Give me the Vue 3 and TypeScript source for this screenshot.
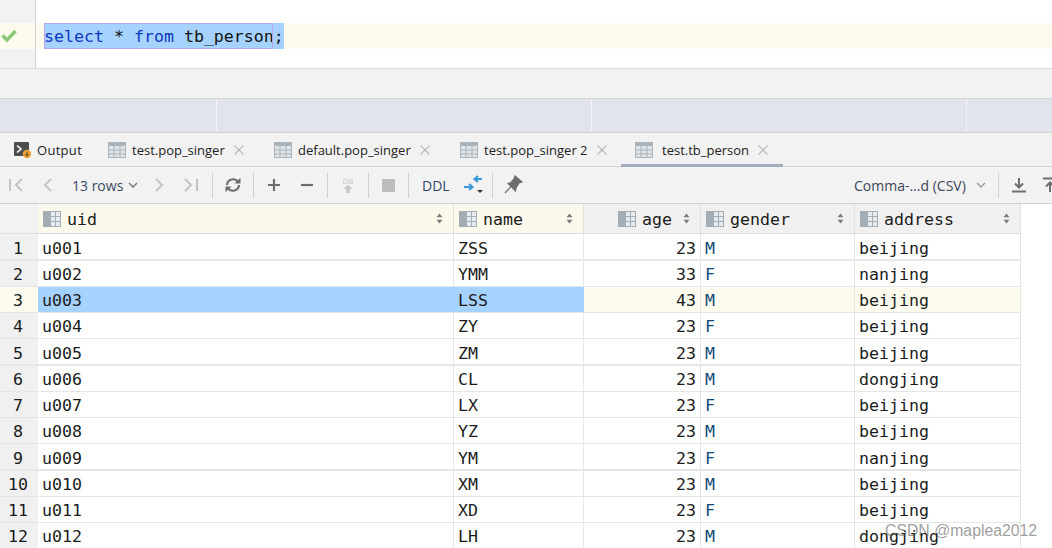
<script setup lang="ts">
interface Row { uid: string; name: string; age: number; gender: string; address: string }
const rows: Row[] = [
  { uid: 'u001', name: 'ZSS', age: 23, gender: 'M', address: 'beijing' },
  { uid: 'u002', name: 'YMM', age: 33, gender: 'F', address: 'nanjing' },
  { uid: 'u003', name: 'LSS', age: 43, gender: 'M', address: 'beijing' },
  { uid: 'u004', name: 'ZY', age: 23, gender: 'F', address: 'beijing' },
  { uid: 'u005', name: 'ZM', age: 23, gender: 'M', address: 'beijing' },
  { uid: 'u006', name: 'CL', age: 23, gender: 'M', address: 'dongjing' },
  { uid: 'u007', name: 'LX', age: 23, gender: 'F', address: 'beijing' },
  { uid: 'u008', name: 'YZ', age: 23, gender: 'M', address: 'beijing' },
  { uid: 'u009', name: 'YM', age: 23, gender: 'F', address: 'nanjing' },
  { uid: 'u010', name: 'XM', age: 23, gender: 'M', address: 'beijing' },
  { uid: 'u011', name: 'XD', age: 23, gender: 'F', address: 'beijing' },
  { uid: 'u012', name: 'LH', age: 23, gender: 'M', address: 'dongjing' },
]
const tabs = [
  { label: 'test.pop_singer', cls: 'tab-a' },
  { label: 'default.pop_singer', cls: 'tab-b' },
  { label: 'test.pop_singer 2', cls: 'tab-c' },
  { label: 'test.tb_person', cls: 'tab-d active' },
]
const columns = [
  { label: 'uid', cls: 'c-uid', hot: true },
  { label: 'name', cls: 'c-name', hot: true },
  { label: 'age', cls: 'c-age', hot: false },
  { label: 'gender', cls: 'c-gender', hot: false },
  { label: 'address', cls: 'c-address', hot: false },
]
const isThick = (i: number) => i % 4 === 0
</script>

<template>
  <div class="page">
    <section class="editor">
      <div class="gutter">
        <div class="gutter-line">
          <svg class="check" width="16" height="14" viewBox="0 0 16 14">
            <path d="M1.5 6.5 L6 11 L14.5 2" fill="none" stroke="#8cc878" stroke-width="3.6" />
          </svg>
        </div>
      </div>
      <div class="code-area">
        <div class="code-line">
          <span class="sel"><span class="kw">select</span> * <span class="kw">from</span> tb_person;<i class="sel-box"></i></span>
        </div>
      </div>
    </section>
    <div class="band"></div>
    <div class="cells">
      <div class="cell c1"></div>
      <div class="cell c2"></div>
      <div class="cell c3"></div>
      <div class="cell c4"></div>
    </div>

    <nav class="tabs">
      <div class="tab tab-out">
        <svg width="18" height="18" viewBox="0 0 18 18">
          <rect x="0" y="1" width="15" height="14" rx="1" fill="#4d4d4d" />
          <path d="M3 4.5 L7 8 L3 11.5" fill="none" stroke="#fff" stroke-width="1.6" />
          <circle cx="13" cy="13" r="4.2" fill="#eda53c" />
          <path d="M13 10.5 V15 M11 13.2 L13 15.2 L15 13.2" fill="none" stroke="#5a3d10" stroke-width="1" />
        </svg>
        <span class="tab-label">Output</span>
      </div>
      <div v-for="t in tabs" :key="t.label" class="tab" :class="t.cls">
        <svg width="18" height="16" viewBox="0 0 18 16">
          <rect x="0.5" y="0.5" width="17" height="15" fill="#dfe4e8" stroke="#a9b4bc" />
          <rect x="0" y="0" width="18" height="4" fill="#a9b4bc" />
          <path d="M0 8 H18 M0 12 H18 M6 4 V16 M12 4 V16" stroke="#a9b4bc" stroke-width="1" />
        </svg>
        <span class="tab-label">{{ t.label }}</span>
        <svg class="close" width="12" height="12" viewBox="0 0 12 12">
          <path d="M1.5 1.5 L10.5 10.5 M10.5 1.5 L1.5 10.5" stroke="#b8b8b8" stroke-width="1.1" />
        </svg>
      </div>
    </nav>

    <div class="toolbar">
      <svg class="ti t-first" width="16" height="14" viewBox="0 0 16 14"><path d="M2 1 V13 M14 1 L8 7 L14 13" fill="none" stroke="#c4c4c4" stroke-width="2" /></svg>
      <svg class="ti t-prev" width="10" height="14" viewBox="0 0 10 14"><path d="M8 1 L2 7 L8 13" fill="none" stroke="#c4c4c4" stroke-width="2" /></svg>
      <span class="rows-label">13 rows</span>
      <svg class="ti t-chev" width="10" height="6" viewBox="0 0 10 6"><path d="M1 1 L5 5 L9 1" fill="none" stroke="#7f7f7f" stroke-width="1.6" /></svg>
      <svg class="ti t-next" width="10" height="14" viewBox="0 0 10 14"><path d="M2 1 L8 7 L2 13" fill="none" stroke="#c4c4c4" stroke-width="2" /></svg>
      <svg class="ti t-last" width="16" height="14" viewBox="0 0 16 14"><path d="M2 1 L8 7 L2 13 M14 1 V13" fill="none" stroke="#c4c4c4" stroke-width="2" /></svg>
      <i class="sep s1"></i>
      <svg class="ti t-ref" width="16" height="16" viewBox="0 0 16 16">
        <path d="M2 8 A6 6 0 0 1 13 5 M14 8 A6 6 0 0 1 3 11" fill="none" stroke="#6e6e6e" stroke-width="2.2" />
        <path d="M9.5 6.5 H15.5 V0.8 Z M6.5 9.5 H0.5 V15.2 Z" fill="#6e6e6e" />
      </svg>
      <i class="sep s2"></i>
      <svg class="ti t-plus" width="14" height="14" viewBox="0 0 14 14"><path d="M7 1 V13 M1 7 H13" stroke="#6e6e6e" stroke-width="2.2" /></svg>
      <svg class="ti t-minus" width="14" height="14" viewBox="0 0 14 14"><path d="M1 7 H13" stroke="#6e6e6e" stroke-width="2.2" /></svg>
      <i class="sep s3"></i>
      <span class="ti t-db"><b>DB</b><svg width="10" height="8" viewBox="0 0 10 8"><path d="M5 0 L10 4 H7 V8 H3 V4 H0 Z" fill="#c8c8c8" /></svg></span>
      <i class="sep s4"></i>
      <span class="ti t-stop"></span>
      <i class="sep s5"></i>
      <span class="ddl">DDL</span>
      <svg class="ti t-cmp" width="20" height="20" viewBox="0 0 20 20">
        <path d="M18 4 H11 M14 1 L10.5 4 L14 7" fill="none" stroke="#3d9ad9" stroke-width="2.2" />
        <path d="M0 12 H8 M5 9 L8.5 12 L5 15" fill="none" stroke="#3d9ad9" stroke-width="2.2" />
        <path d="M13 15 H19 L16 18 Z" fill="#333" />
      </svg>
      <i class="sep s6"></i>
      <svg class="ti t-pin" width="20" height="20" viewBox="0 0 20 20">
        <path d="M12 1 L19 7 L16 8 L13 13 L12.5 16 L5 8.5 L8 7.5 L11 4 Z M7.5 12 L2 18" fill="#6e6e6e" stroke="#6e6e6e" stroke-width="1.2" />
      </svg>
      <span class="spacer"></span>
      <span class="csv">Comma-...d (CSV)</span>
      <svg class="ti t-chev2" width="10" height="6" viewBox="0 0 10 6"><path d="M1 1 L5 5 L9 1" fill="none" stroke="#9a9a9a" stroke-width="1.4" /></svg>
      <i class="sep s7"></i>
      <svg class="ti t-down" width="16" height="16" viewBox="0 0 16 16"><path d="M8 1 V10 M4 6.5 L8 10.5 L12 6.5" fill="none" stroke="#6e6e6e" stroke-width="2" /><path d="M1 14.5 H15" stroke="#6e6e6e" stroke-width="2" /></svg>
      <svg class="ti t-up" width="16" height="16" viewBox="0 0 16 16"><path d="M8 15 V6 M4 9.5 L8 5.5 L12 9.5" fill="none" stroke="#6e6e6e" stroke-width="2" /><path d="M1 1.5 H15" stroke="#6e6e6e" stroke-width="2" /></svg>
    </div>

    <div class="grid">
      <div class="head">
        <div class="num-head"></div>
        <div v-for="c in columns" :key="c.label" class="hcell" :class="[c.cls, { hot: c.hot }]">
          <svg width="18" height="16" viewBox="0 0 18 16">
            <rect x="0" y="0" width="7" height="16" fill="#a3adb5" />
            <rect x="7.5" y="0.5" width="10" height="15" fill="#e8ebee" stroke="#a3adb5" />
            <path d="M8 5.5 H17 M8 10.5 H17 M12.5 1 V15" stroke="#a3adb5" stroke-width="1" />
          </svg>
          <span class="hlabel">{{ c.label }}</span>
          <svg class="sort" width="7" height="11" viewBox="0 0 7 11"><path d="M3.5 0.5 L6.5 4.2 H0.5 Z M3.5 10.5 L6.5 6.8 H0.5 Z" fill="#7a7a7a" /></svg>
        </div>
      </div>
      <div v-for="(r, i) in rows" :key="r.uid" class="row" :class="{ thick: isThick(i), current: i === 2 }">
        <div class="num">{{ i + 1 }}</div>
        <div class="cell-d c-uid">{{ r.uid }}</div>
        <div class="cell-d c-name">{{ r.name }}</div>
        <div class="cell-d c-age right">{{ r.age }}</div>
        <div class="cell-d c-gender gender">{{ r.gender }}</div>
        <div class="cell-d c-address">{{ r.address }}</div>
      </div>
    </div>
    <div class="watermark">CSDN @maplea2012</div>
  </div>
</template>

<style>
html, body { margin: 0; background: #fff; overflow: hidden; }
</style>

<style scoped>
.page {
  position: relative;
  width: 1052px;
  height: 548px;
  overflow: hidden;
  background: #fff;
  display: flex;
  flex-direction: column;
  font-family: "Open Sans", "Noto Sans", sans-serif;
  color: #1f1f1f;
}
.editor { display: flex; height: 68px; flex: none; border-bottom: 1px solid #dcdcdc; }
.gutter { width: 35px; flex: none; background: #f2f2f2; border-right: 1px solid #d0d0d0; padding-top: 23px; }
.gutter-line { height: 26px; background: #fdfbed; display: flex; align-items: center; padding-left: 1px; }
.code-area { flex: 1; padding-top: 23px; }
.code-line {
  height: 26px;
  background: #fdfbed;
  padding-left: 8px;
  font: 16.6px/26px "DejaVu Sans Mono", monospace;
}
.sel { position: relative; display: inline-block; height: 26px; line-height: 28px; background: #a6d2ff; color: #111; }
.sel-box { position: absolute; left: 0; top: 0; bottom: 0; width: 229px; border: 1px solid #b9a6f2; box-sizing: border-box; }
.kw { color: #0d37c4; }
.band { height: 29px; flex: none; background: #f2f2f2; border-bottom: 1px solid #d3d3d3; }
.cells { display: grid; grid-template-columns: 217px 375px 375px 1fr; height: 33px; flex: none; background: #e1e4ec; border-bottom: 1px solid #d3d3d3; }
.cell { border-right: 1px solid #f4f4f4; box-sizing: border-box; }
.c4 { border-right: none; }

.tabs { display: flex; height: 33px; flex: none; background: #f2f2f2; border-bottom: 1px solid #d3d3d3; font-size: 13px; }
.tab { display: flex; align-items: center; box-sizing: border-box; height: 33px; }
.tab-label { white-space: nowrap; color: #222; }
.tab-out { width: 108px; padding-left: 14px; }
.tab-out .tab-label { margin-left: 5px; letter-spacing: 0.3px; }
.tab-a { width: 166px; }
.tab-b { width: 186px; }
.tab-c { width: 161px; }
.tab-d { width: 162px; padding-left: 14px; }
.tab svg:first-child { flex: none; }
.tab-a .tab-label, .tab-b .tab-label, .tab-c .tab-label { margin-left: 6px; }
.tab-d .tab-label { margin-left: 9px; }
.close { margin-left: 8px; flex: none; }
.active { border-bottom: 3px solid #a3adbd; height: 34px; padding-top: 2px; }

.toolbar { display: flex; align-items: center; height: 36px; flex: none; background: #f2f2f2; border-bottom: 1px solid #d3d3d3; padding-left: 8px; font-size: 14px; overflow: hidden; }
.ti { flex: none; display: block; }
.sep { flex: none; width: 1px; height: 25px; background: #d0d0d0; }
.t-prev { margin-left: 19px; }
.rows-label { margin-left: 19px; color: #3a4a66; white-space: nowrap; width: 49px; }
.t-chev { margin-left: 7px; }
.t-next { margin-left: 16px; }
.t-last { margin-left: 19px; }
.s1 { margin-left: 13px; }
.t-ref { margin-left: 12px; }
.s2 { margin-left: 12px; }
.t-plus { margin-left: 13px; }
.t-minus { margin-left: 19px; }
.s3 { margin-left: 13px; }
.t-db { margin-left: 13px; width: 14px; display: flex; flex-direction: column; align-items: center; line-height: 8px; }
.t-db b { font-size: 8px; font-weight: 400; color: #c8c8c8; }
.s4 { margin-left: 13px; }
.t-stop { margin-left: 13px; width: 13px; height: 13px; background: #bdbdbd; }
.s5 { margin-left: 13px; }
.ddl { margin-left: 13px; color: #33476b; width: 28px; white-space: nowrap; }
.t-cmp { margin-left: 14px; }
.s6 { margin-left: 8px; }
.t-pin { margin-left: 10px; }
.spacer { flex: 1; }
.csv { color: #3c4658; white-space: nowrap; width: 111px; }
.t-chev2 { margin-left: 11px; }
.s7 { margin-left: 12px; }
.t-down { margin-left: 12px; }
.t-up { margin-left: 15px; margin-right: -6px; }

.grid { flex: none; width: 1021px; font: 16.6px "DejaVu Sans Mono", monospace; color: #1b1b1b; }
.head { display: flex; height: 30px; box-sizing: border-box; border-bottom: 1px solid #dcdcdc; }
.num-head { width: 38px; flex: none; background: #f2f2f2; }
.hcell {
  display: flex; align-items: center; box-sizing: border-box; background: #f0f0f0;
  border-right: 1px solid #e2e2e2; padding-left: 5px; position: relative;
}
.hcell.hot { background: #fbf8ec; }
.hlabel { margin-left: 6px; padding-top: 2px; }
.sort { margin-left: auto; margin-right: 10px; }
.c-uid { width: 416px; }
.c-name { width: 130px; }
.c-age { width: 117px; justify-content: flex-end; }
.c-age.hcell { justify-content: flex-start; padding-left: 34px; }
.c-gender { width: 154px; }
.c-address { width: 166px; }
.row { display: flex; height: 26px; box-sizing: border-box; border-bottom: 1px solid #e6e6e6; }
.row.thick { height: 27px; border-bottom-width: 2px; }
.row.thick .num, .row.thick .cell-d { line-height: 29px; }
.num { width: 38px; flex: none; background: #f0f0f0; text-align: center; line-height: 27px; padding-right: 2px; box-sizing: border-box; }
.cell-d { box-sizing: border-box; flex: none; border-right: 1px solid #e6e6e6; padding-left: 4px; line-height: 27px; white-space: nowrap; }
.right { text-align: right; padding-right: 4px; }
.gender { color: #0f4a78; }
.current .num { background: #fdfbed; }
.current .c-uid, .current .c-name { background: #a6d2ff; border-right-color: #a6d2ff; }
.current .c-age, .current .c-gender, .current .c-address { background: #fdfbed; }
.watermark {
  position: absolute;
  left: 885px;
  top: 521px;
  font: 15.8px/20px "Liberation Sans", sans-serif;
  color: rgba(90, 90, 90, 0.6);
  white-space: nowrap;
}
</style>
